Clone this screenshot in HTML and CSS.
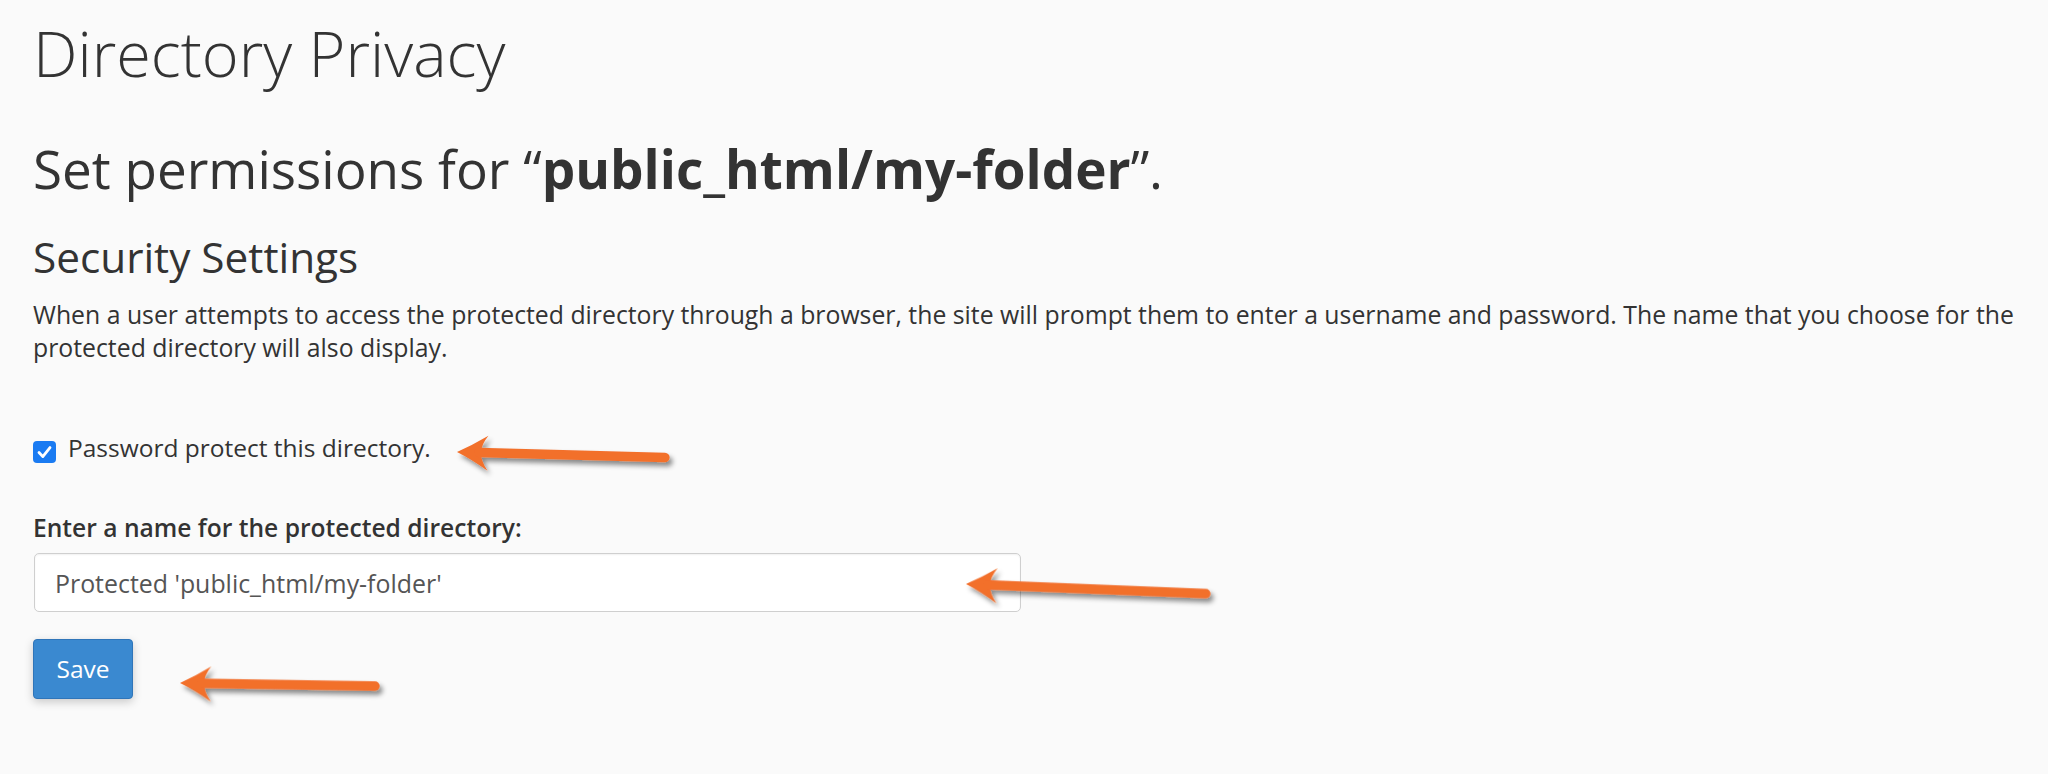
FILE: index.html
```html
<!DOCTYPE html>
<html lang="en">
<head>
<meta charset="utf-8">
<title>Directory Privacy</title>
<link rel="stylesheet" href="styles.css">
</head>
<body>
<main class="page">
  <h1 class="title">Directory Privacy</h1>
  <h2 class="subtitle">Set permissions for “<strong>public_html/my-folder</strong>”.</h2>
  <h3 class="section">Security Settings</h3>
  <p class="desc">When a user attempts to access the protected directory through a browser, the site will prompt them to enter a username and password. The name that you choose for the protected directory will also display.</p>

  <label class="check-row">
    <span class="check">
      <svg viewBox="0 0 23 22" width="23" height="22" aria-hidden="true">
        <rect x="0" y="0" width="23" height="22" rx="4" ry="4" fill="#1a7bf2"/>
        <path d="M6 11.5 L9.8 15.6 L17 6.6" fill="none" stroke="#fff" stroke-width="2.8" stroke-linecap="round" stroke-linejoin="round"/>
      </svg>
    </span>
    <span class="check-text">Password protect this directory.</span>
  </label>

  <div class="field">
    <label class="field-label" for="dirname">Enter a name for the protected directory:</label>
    <input class="field-input" id="dirname" type="text" value="Protected 'public_html/my-folder'">
  </div>

  <button class="btn-save" type="button">Save</button>

  <svg class="annotations" width="2048" height="774" viewBox="0 0 2048 774" aria-hidden="true">
    <defs>
      <filter id="shadow" x="-20%" y="-80%" width="140%" height="260%">
        <feDropShadow dx="3" dy="4" stdDeviation="2.5" flood-color="#000" flood-opacity="0.45"/>
      </filter>
    </defs>
    <g filter="url(#shadow)" fill="#f26f2c" stroke="#f26f2c">
      <g transform="translate(457 452) rotate(1.5)">
        <path d="M0 0 Q15 -7 31 -17 Q24 -8 24 0 Q24 8 31 18 Q15 7 0 0 Z" stroke="none"/>
        <line x1="22" y1="0" x2="208" y2="0" stroke-width="9.5" stroke-linecap="round"/>
      </g>
      <g transform="translate(966 584) rotate(2.3)">
        <path d="M0 0 Q15 -7 31 -17 Q24 -8 24 0 Q24 8 31 18 Q15 7 0 0 Z" stroke="none"/>
        <line x1="22" y1="0" x2="240" y2="0" stroke-width="9.5" stroke-linecap="round"/>
      </g>
      <g transform="translate(180 683) rotate(0.9)">
        <path d="M0 0 Q15 -7 31 -17 Q24 -8 24 0 Q24 8 31 18 Q15 7 0 0 Z" stroke="none"/>
        <line x1="22" y1="0" x2="195" y2="0" stroke-width="9.5" stroke-linecap="round"/>
      </g>
    </g>
  </svg>
</main>
</body>
</html>
```
FILE: styles.css
```css
html, body {
  margin: 0;
  padding: 0;
  background: #fafafa;
}

body {
  font-family: "Open Sans", "Noto Sans", "DejaVu Sans", sans-serif;
  color: #333;
  width: 2048px;
  height: 774px;
  overflow: hidden;
}

.page {
  position: relative;
  box-sizing: border-box;
  width: 2048px;
  height: 774px;
  padding: 18px 20px 0 33px;
}

.title {
  margin: 0;
  font-size: 63px;
  line-height: 69px;
  font-weight: 300;
}

.subtitle {
  margin: 52px 0 0;
  font-size: 53px;
  line-height: 60px;
  font-weight: 400;
}

.subtitle strong {
  font-weight: 700;
}

.section {
  margin: 35px 0 0;
  font-size: 42.3px;
  line-height: 46px;
  font-weight: 400;
}

.desc {
  margin: 18px 0 0;
  font-size: 24.8px;
  line-height: 33px;
}

.check-row {
  display: flex;
  align-items: flex-start;
  gap: 12px;
  margin-top: 69px;
  font-size: 24.5px;
  line-height: 30px;
}

.check {
  display: block;
  width: 23px;
  height: 22px;
  margin-top: 8px;
}

.check svg {
  display: block;
}

.field {
  display: flex;
  flex-direction: column;
  align-items: flex-start;
  margin-top: 50px;
}

.field-label {
  font-size: 24.6px;
  line-height: 30px;
  font-weight: 600;
}

.field-input {
  box-sizing: border-box;
  margin: 10px 0 0 1px;
  width: 987px;
  height: 59px;
  padding: 0 20px;
  border: 1px solid #cfcfcf;
  border-radius: 5px;
  background: #fff;
  font-family: "Open Sans", "Noto Sans", sans-serif;
  font-size: 24.9px;
  color: #555;
  box-shadow: inset 0 1px 2px rgba(0, 0, 0, 0.06);
}

.btn-save {
  display: block;
  box-sizing: border-box;
  margin-top: 27px;
  width: 100px;
  height: 60px;
  padding: 0;
  border: 1px solid #2f75b9;
  border-radius: 4px;
  background: #3a89d0;
  color: #fff;
  font-family: "Open Sans", "Noto Sans", sans-serif;
  font-size: 24.5px;
  line-height: 1;
  box-shadow: 0 3px 10px rgba(0, 0, 0, 0.2);
}

.annotations {
  position: absolute;
  left: 0;
  top: 0;
  pointer-events: none;
}
```
